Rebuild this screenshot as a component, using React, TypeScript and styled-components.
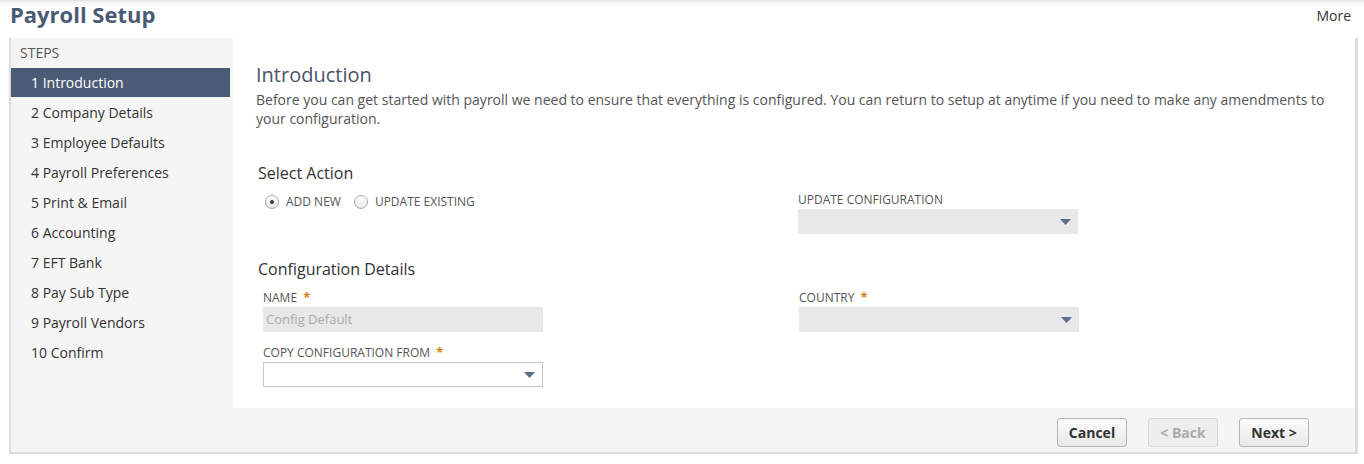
import styled, { createGlobalStyle } from 'styled-components';

const GlobalStyle = createGlobalStyle`
   html, body {
      margin: 0;
      padding: 0;
      background: #fff;
      font-family: "Open Sans", "Liberation Sans", Arial, sans-serif;
      color: #333;
   }
`;

const steps = [
   'Introduction',
   'Company Details',
   'Employee Defaults',
   'Payroll Preferences',
   'Print & Email',
   'Accounting',
   'EFT Bank',
   'Pay Sub Type',
   'Payroll Vendors',
   'Confirm',
];

function Caret() {
   return (
      <svg width="11" height="6" viewBox="0 0 11 6">
         <path d="M0 0 L11 0 L5.5 6 Z" fill="#5b6e8c" />
      </svg>
   );
}

export default function App() {
   return (
      <>
         <GlobalStyle />
         <Header>
            <Title>Payroll Setup</Title>
            <MoreLink>More</MoreLink>
         </Header>

         <Frame>
            <Sidebar>
               <StepsTitle>Steps</StepsTitle>
               {steps.map((s, i) => (
                  <StepItem key={s} $active={i === 0}>{i + 1} {s}</StepItem>
               ))}
            </Sidebar>

            <Main>
               <Panel>
                  <PageHeading>Introduction</PageHeading>
                  <Intro>
                     Before you can get started with payroll we need to ensure that everything is configured. You can return to setup at anytime if you need to make any amendments to your configuration.
                  </Intro>

                  <SectionTitle $top={35}>Select Action</SectionTitle>
                  <FormRow $gap={9}>
                     <RadioGroup>
                        <RadioOption>
                           <Radio $checked />
                           Add New
                        </RadioOption>
                        <RadioOption>
                           <Radio />
                           Update Existing
                        </RadioOption>
                     </RadioGroup>
                     <Field>
                        <Label>Update Configuration</Label>
                        <SelectBox $filled>
                           <Caret />
                        </SelectBox>
                     </Field>
                  </FormRow>

                  <SectionTitle $top={25}>Configuration Details</SectionTitle>
                  <FormRow $gap={11}>
                     <Field>
                        <Label>Name <Req>*</Req></Label>
                        <TextBox>Config Default</TextBox>
                     </Field>
                     <Field $shift={1}>
                        <Label>Country <Req>*</Req></Label>
                        <SelectBox $filled>
                           <Caret />
                        </SelectBox>
                     </Field>
                  </FormRow>
                  <FormRow $gap={13}>
                     <Field>
                        <Label>Copy Configuration From <Req>*</Req></Label>
                        <SelectBox>
                           <Caret />
                        </SelectBox>
                     </Field>
                  </FormRow>
               </Panel>

               <Footer>
                  <Button>Cancel</Button>
                  <Button disabled>&lt; Back</Button>
                  <Button>Next &gt;</Button>
               </Footer>
            </Main>
         </Frame>
      </>
   );
}

const Header = styled.div`
   display: flex;
   align-items: flex-start;
   justify-content: space-between;
   height: 38px;
   padding: 0 13px 0 10px;
   background: linear-gradient(to bottom, #e4e4e4 0px, #f6f6f6 3px, #fff 7px);
`;

const Title = styled.h1`
   margin: 0;
   font-size: 22px;
   line-height: 28px;
   font-weight: 700;
   color: #4c5b75;
`;

const MoreLink = styled.div`
   font-size: 14px;
   line-height: 20px;
   margin-top: 6px;
   color: #333;
`;

const Frame = styled.div`
   display: flex;
   margin: 0 6px 0 9px;
   min-height: 414px;
   background: #f5f5f5;
   border: 2px solid #dcdcdc;
   border-top: none;
   border-right-width: 3px;
`;

const Sidebar = styled.div`
   width: 222px;
   flex-shrink: 0;
`;

const StepsTitle = styled.div`
   height: 30px;
   line-height: 30px;
   padding-left: 9px;
   font-size: 14px;
   text-transform: uppercase;
   color: #555;
`;

const StepItem = styled.div<{ $active?: boolean }>`
   height: 29px;
   line-height: 29px;
   margin: 0 3px 1px 0;
   padding-left: 20px;
   font-size: 14px;
   color: ${p => (p.$active ? '#fff' : '#333')};
   background: ${p => (p.$active ? '#4c5b75' : 'transparent')};
`;

const Main = styled.div`
   flex: 1;
   display: flex;
   flex-direction: column;
`;

const Panel = styled.div`
   background: #fff;
   padding: 24px 24px 21px 23px;
`;

const PageHeading = styled.h2`
   margin: 0 0 2px;
   font-size: 20px;
   line-height: 26px;
   font-weight: 400;
   color: #4a5468;
`;

const Intro = styled.p`
   margin: 0;
   font-size: 14px;
   line-height: 19px;
   color: #555;
`;

const SectionTitle = styled.h3<{ $top: number }>`
   margin: ${p => p.$top}px 0 0 2px;
   font-size: 16px;
   line-height: 20px;
   font-weight: 400;
   color: #333;
`;

const FormRow = styled.div<{ $gap: number }>`
   display: grid;
   grid-template-columns: 535px 280px;
   align-items: start;
   margin-top: ${p => p.$gap}px;
   padding-left: 7px;
`;

const RadioGroup = styled.div`
   display: flex;
   align-items: center;
   gap: 6px;
   height: 16px;
   padding: 2px 0 0 2px;
`;

const RadioOption = styled.label`
   display: flex;
   align-items: center;
   gap: 7px;
   margin-right: 7px;
   font-size: 12px;
   line-height: 16px;
   text-transform: uppercase;
   color: #555;
`;

const Radio = styled.span<{ $checked?: boolean }>`
   position: relative;
   width: 12px;
   height: 12px;
   border-radius: 50%;
   border: 1px solid #a8a8a8;
   background: linear-gradient(to bottom, #fff, #e6e6e6);
   &::after {
      content: '';
      display: ${p => (p.$checked ? 'block' : 'none')};
      position: absolute;
      left: 4px;
      top: 4px;
      width: 4px;
      height: 4px;
      border-radius: 50%;
      background: #333;
   }
`;

const Field = styled.div<{ $shift?: number }>`
   display: flex;
   flex-direction: column;
   gap: 1px;
   width: 280px;
   margin-left: ${p => p.$shift ?? 0}px;
`;

const Label = styled.div`
   height: 16px;
   font-size: 12px;
   line-height: 16px;
   text-transform: uppercase;
   color: #555;
`;

const Req = styled.span`
   margin-left: 3px;
   color: #d2850c;
   font-weight: 700;
   font-size: 13px;
   line-height: 0;
`;

const TextBox = styled.div`
   height: 25px;
   line-height: 25px;
   padding: 0 3px;
   font-size: 13px;
   color: #aaa;
   background: #e8e8e8;
`;

const SelectBox = styled.div<{ $filled?: boolean }>`
   box-sizing: border-box;
   height: 25px;
   display: flex;
   align-items: center;
   justify-content: flex-end;
   padding-right: 7px;
   background: ${p => (p.$filled ? '#e8e8e8' : '#fff')};
   border: ${p => (p.$filled ? 'none' : '1px solid #c8c8c8')};
`;

const Footer = styled.div`
   flex: 1;
   display: flex;
   justify-content: flex-end;
   align-items: flex-start;
   gap: 21px;
   padding: 10px 46px 0 0;
`;

const Button = styled.button`
   height: 29px;
   min-width: 70px;
   padding: 0 10px;
   font-family: inherit;
   font-size: 14px;
   font-weight: 700;
   color: #333;
   border: 1px solid #b5b5b5;
   border-radius: 3px;
   background: linear-gradient(to bottom, #fafafa, #e9e9e9);
   &:disabled {
      color: #aaa;
      border-color: #d5d5d5;
      background: #eee;
   }
`;
